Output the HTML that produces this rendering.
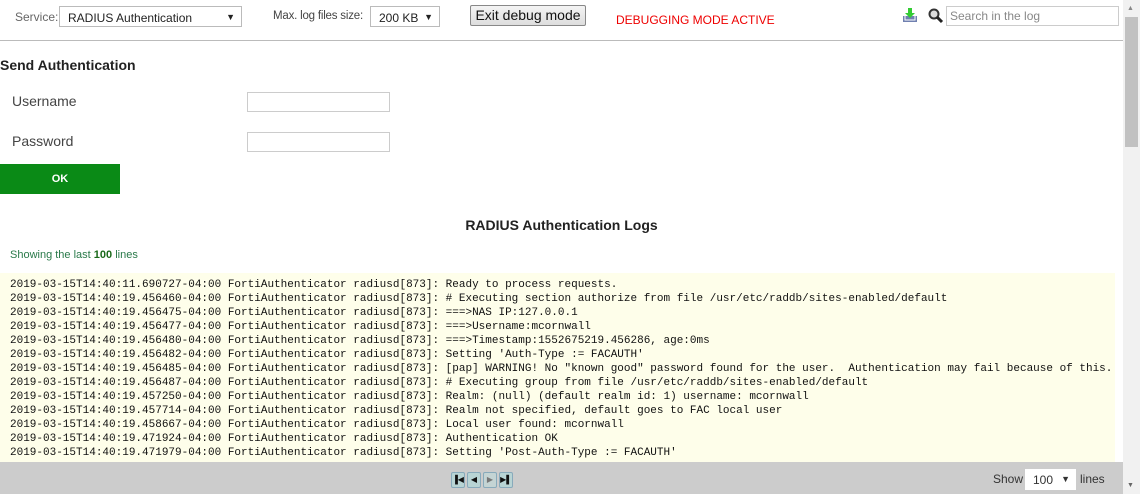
<!DOCTYPE html>
<html><head><style>
body{margin:0;width:1140px;height:494px;overflow:hidden;position:relative;font-family:"Liberation Sans",sans-serif;background:#fff;color:#333}
.a{position:absolute}
.sel{border:1px solid #bbb;background:#fff;font-size:12px;color:#222;box-sizing:border-box}
.sel span{position:absolute;right:6px;top:5px;font-size:9px}
pre{margin:0;font-family:"Liberation Mono",monospace;font-size:11px;line-height:14px;color:#111}
.pb{width:14px;height:16px;background:#b8d4d4;border:1px solid #8ab;box-sizing:border-box;font-size:8px;text-align:center;line-height:14px;color:#111;border-radius:2px}
</style></head><body>
<div class="a" style="left:15px;top:10px;font-size:12px;color:#666">Service:</div>
<div class="a sel" style="left:59px;top:6px;width:183px;height:21px;padding:4px 8px">RADIUS Authentication<span>▼</span></div>
<div class="a" style="left:273px;top:10px;font-size:11.5px;color:#444;letter-spacing:-0.2px">Max. log files size:</div>
<div class="a sel" style="left:370px;top:6px;width:70px;height:21px;padding:4px 8px">200 KB<span>▼</span></div>
<div class="a" style="left:470px;top:5px;width:116px;height:21px;border:1px solid #888;background:linear-gradient(#f4f4f4,#ddd);font-size:14px;color:#111;text-align:center;line-height:19px;box-sizing:border-box;border-radius:2px">Exit debug mode</div>
<div class="a" style="left:616px;top:13px;font-size:12px;color:#e00">DEBUGGING MODE ACTIVE</div>
<svg class="a" style="left:902px;top:7px" width="16" height="16"><rect x="1" y="9" width="14" height="6" fill="#7080b0"/><path d="M3 9 L3 13 L13 13 L13 9" stroke="#fff" fill="none"/><path d="M6 1h4v5h3l-5 5-5-5h3z" fill="#3c3"/></svg>
<svg class="a" style="left:928px;top:8px" width="16" height="16"><circle cx="6" cy="6" r="4.5" stroke="#333" stroke-width="2" fill="#ddd"/><path d="M9 9l5 5" stroke="#222" stroke-width="3"/></svg>
<div class="a" style="left:946px;top:6px;width:173px;height:20px;border:1px solid #ccc;box-sizing:border-box;font-size:12px;color:#888;padding:2px 3px">Search in the log</div>
<div class="a" style="left:0;top:40px;width:1123px;height:1px;background:#bbb"></div>
<div class="a" style="left:1123px;top:0;width:17px;height:494px;background:#f1f1f1"></div>
<div class="a" style="left:1125px;top:17px;width:13px;height:130px;background:#c1c1c1"></div>
<div class="a" style="left:1127px;top:5px;font-size:7px;color:#888">▲</div>
<div class="a" style="left:1127px;top:482px;font-size:7px;color:#666">▼</div>
<div class="a" style="left:0;top:57px;font-size:14px;font-weight:bold;color:#222">Send Authentication</div>
<div class="a" style="left:12px;top:93px;font-size:14px;color:#444">Username</div>
<div class="a" style="left:12px;top:133px;font-size:14px;color:#444">Password</div>
<div class="a" style="left:247px;top:92px;width:143px;height:20px;border:1px solid #ccc;box-sizing:border-box"></div>
<div class="a" style="left:247px;top:132px;width:143px;height:20px;border:1px solid #ccc;box-sizing:border-box"></div>
<div class="a" style="left:0;top:164px;width:120px;height:30px;background:#0a8a16;color:#fff;font-size:11px;font-weight:bold;text-align:center;line-height:30px">OK</div>
<div class="a" style="left:0;top:217px;width:1123px;text-align:center;font-size:14px;font-weight:bold;color:#222">RADIUS Authentication Logs</div>
<div class="a" style="left:10px;top:249px;font-size:11px;color:#2a7a4a">Showing the last <b style="color:#1a6a1a">100</b> lines</div>
<div class="a" style="left:0;top:273px;width:1115px;height:189px;background:#fefeea;overflow:hidden"><pre style="padding:5px 0 0 10px">2019-03-15T14:40:11.690727-04:00 FortiAuthenticator radiusd[873]: Ready to process requests.
2019-03-15T14:40:19.456460-04:00 FortiAuthenticator radiusd[873]: # Executing section authorize from file /usr/etc/raddb/sites-enabled/default
2019-03-15T14:40:19.456475-04:00 FortiAuthenticator radiusd[873]: ===>NAS IP:127.0.0.1
2019-03-15T14:40:19.456477-04:00 FortiAuthenticator radiusd[873]: ===>Username:mcornwall
2019-03-15T14:40:19.456480-04:00 FortiAuthenticator radiusd[873]: ===>Timestamp:1552675219.456286, age:0ms
2019-03-15T14:40:19.456482-04:00 FortiAuthenticator radiusd[873]: Setting 'Auth-Type := FACAUTH'
2019-03-15T14:40:19.456485-04:00 FortiAuthenticator radiusd[873]: [pap] WARNING! No "known good" password found for the user.  Authentication may fail because of this.
2019-03-15T14:40:19.456487-04:00 FortiAuthenticator radiusd[873]: # Executing group from file /usr/etc/raddb/sites-enabled/default
2019-03-15T14:40:19.457250-04:00 FortiAuthenticator radiusd[873]: Realm: (null) (default realm id: 1) username: mcornwall
2019-03-15T14:40:19.457714-04:00 FortiAuthenticator radiusd[873]: Realm not specified, default goes to FAC local user
2019-03-15T14:40:19.458667-04:00 FortiAuthenticator radiusd[873]: Local user found: mcornwall
2019-03-15T14:40:19.471924-04:00 FortiAuthenticator radiusd[873]: Authentication OK
2019-03-15T14:40:19.471979-04:00 FortiAuthenticator radiusd[873]: Setting 'Post-Auth-Type := FACAUTH'</pre></div>
<div class="a" style="left:0;top:462px;width:1123px;height:32px;background:#cccccc"></div>
<div class="a" style="left:451px;top:472px;display:flex;gap:2px">
<div class="pb">▐◀</div>
<div class="pb">◀</div>
<div class="pb" style="color:#777;background:#c4d4d4">▶</div>
<div class="pb">▶▌</div>
</div>
<div class="a" style="left:993px;top:472px;font-size:12px;color:#333">Show</div>
<div class="a" style="left:1025px;top:469px;height:21px;background:#fff;font-size:12px;padding:4px 0 0 8px;box-sizing:border-box;width:51px">100<span style="position:absolute;right:6px;font-size:9px;top:5px">▼</span></div>
<div class="a" style="left:1080px;top:472px;font-size:12px;color:#333">lines</div>
</body></html>
